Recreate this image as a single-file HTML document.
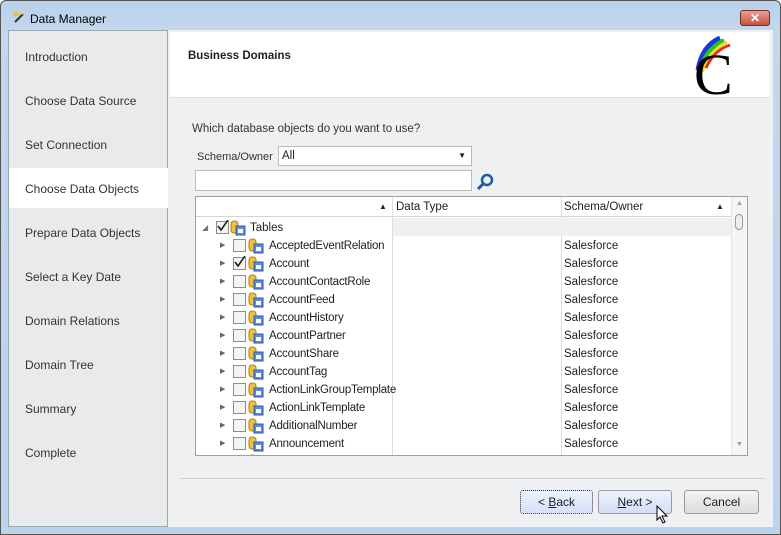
<!DOCTYPE html>
<html><head><style>
*{margin:0;padding:0;box-sizing:border-box}
body{width:781px;height:535px;overflow:hidden;font-family:"Liberation Sans",sans-serif;font-size:11.5px;color:#1e1e1e;background:#fff}
.win{position:absolute;left:0;top:0;width:781px;height:535px;background:linear-gradient(#b9d1ea,#c3d7ee 30px,#bcd3ec);box-shadow:inset 0 0 0 1px #555;border-radius:6px 6px 0 0}
.a{position:absolute}
.nav{left:8px;top:30px;width:160px;height:497px;background:#e9eaec;border:1px solid #9aa;}
.nav div{position:absolute;left:0;width:158px;height:40px;line-height:40px;padding-left:16px;font-size:12px;color:#333}
.content{left:168px;top:30px;width:605px;height:497px;background:#eff0f2}
.tree{left:195px;top:196px;width:553px;height:260px;background:#fff;border:1px solid #a0a0a0;overflow:hidden}
.row{position:absolute;left:0;height:18px;line-height:20px;width:535px}
.cb{position:absolute;width:13px;height:13px;border:1px solid #8e8e8e;background:#f4f4f4;top:3px}
.ic{position:absolute;top:2px;width:16px;height:16px}
.btn{position:absolute;top:490px;height:24px;border:1px solid #9a9a9a;border-radius:3px;background:linear-gradient(#f3f3f3,#dddddd);text-align:center;line-height:23px;font-size:12px}
</style></head><body>
<div class="win">
<div class="a" style="left:12px;top:10px;width:14px;height:14px"><svg width="14" height="14"><path d="M3 12 L11 4" stroke="#333" stroke-width="2"/><circle cx="4" cy="4" r="2.5" fill="#f0c030"/><circle cx="10" cy="3" r="1.5" fill="#f0d050"/></svg></div>
<div class="a" style="left:30px;top:12px;font-size:12px;color:#000">Data Manager</div>
<div class="a" style="left:740px;top:10px;width:30px;height:16px;border:1px solid #7a2a22;border-radius:3px;background:linear-gradient(#e8a095,#c8503e);color:#fff;font-weight:bold;text-align:center;line-height:14px;font-size:12px">✕</div>
<div class="a nav">
<div style="top:6px">Introduction</div>
<div style="top:50px">Choose Data Source</div>
<div style="top:94px">Set Connection</div>
<div style="top:137px;background:#fff;height:40px;width:159px;line-height:42px">Choose Data Objects</div>
<div style="top:182px">Prepare Data Objects</div>
<div style="top:226px">Select a Key Date</div>
<div style="top:270px">Domain Relations</div>
<div style="top:314px">Domain Tree</div>
<div style="top:358px">Summary</div>
<div style="top:402px">Complete</div>
</div>
<div class="a content"></div>
<div class="a" style="left:170px;top:32px;width:600px;height:66px;background:#fff;border-bottom:1px solid #ddd"></div>
<div class="a" style="left:188px;top:50px;font-weight:bold;font-size:11.5px;color:#222">Business Domains</div>
<svg class="a" style="left:690px;top:32px" width="60" height="66"><path d="M30 6 Q12 14 8 38" stroke="#1b3ad8" stroke-width="5" fill="none"/><path d="M34 8 Q14 18 10 40" stroke="#2bbf2b" stroke-width="4" fill="none"/><path d="M37 10 Q20 18 12 40" stroke="#e8e020" stroke-width="3" fill="none"/><path d="M40 13 Q24 18 16 36" stroke="#e03020" stroke-width="3" fill="none"/><text x="4" y="62" font-family="Liberation Serif" font-size="58" fill="#000">C</text></svg>
<div class="a" style="left:192px;top:123px;color:#333">Which database objects do you want to use?</div>
<div class="a" style="left:197px;top:151px;color:#333;font-size:11px">Schema/Owner</div>
<div class="a" style="left:278px;top:146px;width:194px;height:20px;background:#fff;border:1px solid #bbb;padding:3px 3px">All<span style="position:absolute;right:5px;top:4px;font-size:8px">▼</span></div>
<div class="a" style="left:195px;top:170px;width:277px;height:21px;background:#fff;border:1px solid #bbb"></div>
<svg class="a" style="left:476px;top:172px" width="20" height="20"><circle cx="11" cy="8" r="5" stroke="#1d5aa8" stroke-width="2.5" fill="none"/><path d="M7 12 L2 17" stroke="#1d5aa8" stroke-width="3"/></svg>
<div class="a tree">
<div class="a" style="left:0;top:0;width:535px;height:20px;background:#fff;border-bottom:1px solid #d5d5d5"></div>
<div class="a" style="left:196px;top:0;width:1px;height:258px;background:#ddd"></div>
<div class="a" style="left:365px;top:0;width:1px;height:258px;background:#ddd"></div>
<div class="a" style="left:183px;top:5px;font-size:8px">▲</div>
<div class="a" style="left:200px;top:4px">Data Type</div>
<div class="a" style="left:368px;top:4px">Schema/Owner</div>
<div class="a" style="left:520px;top:5px;font-size:8px">▲</div>
<div class="a" style="left:197px;top:21px;width:338px;height:18px;background:#f0f0f0"></div>
<div class="a" style="left:535px;top:0;width:17px;height:258px;background:#f5f5f5;border-left:1px solid #e5e5e5"></div>
<div class="a" style="left:540px;top:3px;font-size:7px;color:#999">▲</div>
<div class="a" style="left:539px;top:17px;width:8px;height:16px;border:1px solid #999;border-radius:4px;background:#eee"></div>
<div class="a" style="left:540px;top:244px;font-size:7px;color:#999">▼</div>
<div id="rows"></div>
</div>
<div class="a" style="left:180px;top:478px;width:585px;height:1px;background:#d0d0d0"></div>
<div class="btn" style="left:520px;width:73px;border:1px dotted #333;background:linear-gradient(#eef2fd,#d8e0f8)">&lt; <u>B</u>ack</div>
<div class="btn" style="left:598px;width:74px;background:linear-gradient(#eef2fd,#d5ddf8)"><u>N</u>ext &gt;</div>
<div class="btn" style="left:684px;width:75px">Cancel</div>
<svg class="a" style="left:656px;top:505px" width="14" height="20"><path d="M1 1 L1 15 L4 12 L7 18 L9 17 L6 11 L11 11 Z" fill="#fff" stroke="#000"/></svg>
</div>
<script>
var names=["AcceptedEventRelation","Account","AccountContactRole","AccountFeed","AccountHistory","AccountPartner","AccountShare","AccountTag","ActionLinkGroupTemplate","ActionLinkTemplate","AdditionalNumber","Announcement",""];
var ic='<svg width="16" height="16"><rect x="1" y="1" width="7" height="12" rx="3" fill="#f2c040" stroke="#b08010"/><rect x="6" y="6" width="9" height="9" fill="#5a8ed8" stroke="#2a5aa8"/><rect x="8" y="9" width="5" height="4" fill="#fff"/></svg>';
var h='<div class="row" style="top:21px"><span class="a" style="left:6px;top:0;font-size:8px;color:#777">◢</span><div class="cb" style="left:20px">'+'<svg width="12" height="12" style="position:absolute;left:0;top:-2px"><path d="M1 6 L4 10 L11 0" stroke="#222" stroke-width="1.6" fill="none"/></svg></div><div class="ic" style="left:34px">'+ic+'</div><span class="a" style="left:54px">Tables</span></div>';
for(var i=0;i<names.length;i++){var t=39+i*18;
h+='<div class="row" style="top:'+t+'px"><span class="a" style="left:24px;font-size:7px;color:#666">▶</span><div class="cb" style="left:37px">'+(i==1?'<svg width="12" height="12" style="position:absolute;left:0;top:-2px"><path d="M1 6 L4 10 L11 0" stroke="#222" stroke-width="1.6" fill="none"/></svg>':'')+'</div><div class="ic" style="left:52px">'+ic+'</div><span class="a" style="left:73px;letter-spacing:-0.2px">'+names[i]+'</span>'+(names[i]?'<span class="a" style="left:368px">Salesforce</span>':'')+'</div>';}
document.getElementById('rows').innerHTML=h;
</script>
</body></html>
